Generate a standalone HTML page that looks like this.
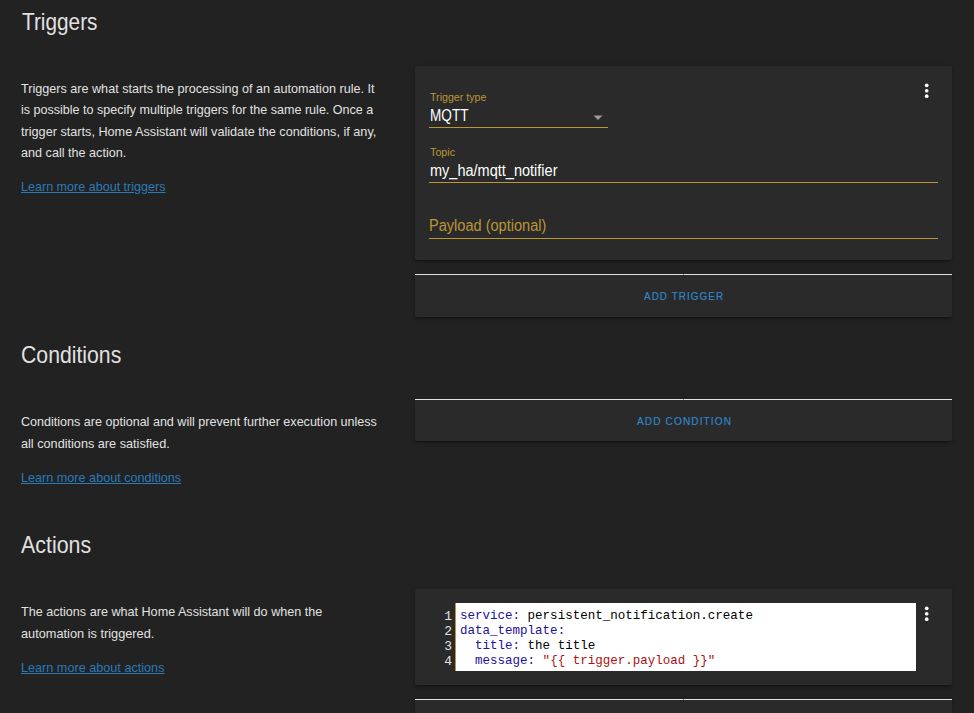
<!DOCTYPE html>
<html><head><meta charset="utf-8">
<style>
html,body{margin:0;padding:0;}
body{width:974px;height:713px;overflow:hidden;background:#222222;position:relative;font-family:"Liberation Sans",sans-serif;color:#e1e1e1;}
.t{position:absolute;white-space:nowrap;line-height:20px;transform-origin:0 0;}
.bm{display:inline-block;width:0;height:0;vertical-align:baseline;}
.abs{position:absolute;white-space:nowrap;}
.card{position:absolute;left:415px;width:537px;background:#2a2a2a;border-radius:2px;box-shadow:0 2px 2px 0 rgba(0,0,0,.14),0 1px 5px 0 rgba(0,0,0,.12),0 3px 1px -2px rgba(0,0,0,.2);}
.topline{position:absolute;left:0;right:0;top:0;height:1px;background:#e2e2e2;}
.notch{position:absolute;left:268px;top:0;width:1px;height:1px;background:#8a8a8a;}
.ul{position:absolute;height:1px;background:#bb9636;}
.dots{position:absolute;width:4px;}
.dots i{display:block;width:4px;height:4px;border-radius:50%;background:#fff;margin-bottom:1.5px;}
.code{font-family:"Liberation Mono",monospace;font-size:12.5px;line-height:15px;white-space:pre;}
.k{color:#221199;}
.s{color:#aa1111;}
</style></head>
<body>
<div class="card" style="top:66px;height:194px;">
  <svg class="abs" style="left:178px;top:48.8px;" width="10" height="6" viewBox="0 0 10 6"><path d="M0.5 0.5 L9.5 0.5 L5 5 Z" fill="#9a9a9a"/></svg>
  <div class="ul" style="left:14px;width:179px;top:61px;"></div>
  <div class="ul" style="left:14px;width:509px;top:116px;"></div>
  <div class="ul" style="left:14px;width:509px;top:172px;"></div>
  <svg class="abs" style="left:505px;top:12px;" width="14" height="25" viewBox="505 12 14 25"><circle cx="511.7" cy="19.3" r="1.85" fill="#fff"/><circle cx="511.7" cy="24.75" r="1.85" fill="#fff"/><circle cx="511.7" cy="30.2" r="1.85" fill="#fff"/></svg>
</div>
<div class="card" style="top:274px;height:43px;"><div class="topline"></div><div class="notch"></div></div>
<div class="card" style="top:399px;height:42px;"><div class="topline"></div><div class="notch"></div></div>
<div class="card" style="top:589px;height:96px;">
  <div class="abs code" style="left:19.5px;top:20px;width:17.5px;text-align:right;color:#e0e0e0;font-size:13px;">1
2
3
4</div>
  <div class="abs" style="left:40px;top:14px;width:460px;height:68px;background:#fff;border-left:1px solid #bb9636;"></div>
  <div class="abs code" style="left:44.5px;top:18.5px;color:#000;font-size:13.5px;transform:scaleX(0.927);transform-origin:0 0;"><span class="k">service:</span> persistent_notification.create
<span class="k">data_template:</span>
  <span class="k">title:</span> the title
  <span class="k">message:</span> <span class="s">"{{ trigger.payload }}"</span></div>
  <svg class="abs" style="left:505px;top:12px;" width="14" height="25" viewBox="505 12 14 25"><circle cx="511.7" cy="19.3" r="1.85" fill="#fff"/><circle cx="511.7" cy="24.75" r="1.85" fill="#fff"/><circle cx="511.7" cy="30.2" r="1.85" fill="#fff"/></svg>
</div>
<div class="card" style="top:699px;height:60px;"><div class="topline"></div><div class="notch"></div></div>
<div id="h1" class="t" style="left:21.50px;top:12.00px;font-size:23.2px;font-weight:400;color:#e1e1e1;transform:scaleX(0.8968);">Triggers<span class="bm"></span></div>
<div id="t1" class="t" style="left:20.50px;top:78.50px;font-size:13.2px;font-weight:400;color:#e1e1e1;transform:scaleX(0.9562);">Triggers are what starts the processing of an automation rule. It<span class="bm"></span></div>
<div id="t2" class="t" style="left:20.50px;top:100.00px;font-size:13.2px;font-weight:400;color:#e1e1e1;transform:scaleX(0.9518);">is possible to specify multiple triggers for the same rule. Once a<span class="bm"></span></div>
<div id="t3" class="t" style="left:20.50px;top:121.50px;font-size:13.2px;font-weight:400;color:#e1e1e1;transform:scaleX(0.9605);">trigger starts, Home Assistant will validate the conditions, if any,<span class="bm"></span></div>
<div id="t4" class="t" style="left:20.50px;top:143.00px;font-size:13.2px;font-weight:400;color:#e1e1e1;transform:scaleX(0.9574);">and call the action.<span class="bm"></span></div>
<div id="tl" class="t" style="left:20.50px;top:176.60px;font-size:13.2px;font-weight:400;color:#2b7ab8;transform:scaleX(0.9522);text-decoration:underline;">Learn more about triggers<span class="bm"></span></div>
<div id="h2" class="t" style="left:21.10px;top:344.70px;font-size:23.2px;font-weight:400;color:#e1e1e1;transform:scaleX(0.9153);">Conditions<span class="bm"></span></div>
<div id="c1" class="t" style="left:20.50px;top:411.80px;font-size:13.2px;font-weight:400;color:#e1e1e1;transform:scaleX(0.9519);">Conditions are optional and will prevent further execution unless<span class="bm"></span></div>
<div id="c2" class="t" style="left:20.50px;top:433.90px;font-size:13.2px;font-weight:400;color:#e1e1e1;transform:scaleX(0.9614);">all conditions are satisfied.<span class="bm"></span></div>
<div id="cl" class="t" style="left:20.50px;top:467.80px;font-size:13.2px;font-weight:400;color:#2b7ab8;transform:scaleX(0.9578);text-decoration:underline;">Learn more about conditions<span class="bm"></span></div>
<div id="h3" class="t" style="left:21.10px;top:534.70px;font-size:23.2px;font-weight:400;color:#e1e1e1;transform:scaleX(0.9217);">Actions<span class="bm"></span></div>
<div id="a1" class="t" style="left:20.50px;top:601.60px;font-size:13.2px;font-weight:400;color:#e1e1e1;transform:scaleX(0.9559);">The actions are what Home Assistant will do when the<span class="bm"></span></div>
<div id="a2" class="t" style="left:20.50px;top:623.70px;font-size:13.2px;font-weight:400;color:#e1e1e1;transform:scaleX(0.9672);">automation is triggered.<span class="bm"></span></div>
<div id="al" class="t" style="left:20.50px;top:657.80px;font-size:13.2px;font-weight:400;color:#2b7ab8;transform:scaleX(0.9594);text-decoration:underline;">Learn more about actions<span class="bm"></span></div>
<div id="f1" class="t" style="left:429.70px;top:86.90px;font-size:11.5px;font-weight:400;color:#bb9636;transform:scaleX(0.9241);">Trigger type<span class="bm"></span></div>
<div id="f2" class="t" style="left:429.50px;top:106.00px;font-size:15.8px;font-weight:400;color:#ffffff;transform:scaleX(0.8605);">MQTT<span class="bm"></span></div>
<div id="f3" class="t" style="left:429.90px;top:141.90px;font-size:11.5px;font-weight:400;color:#bb9636;transform:scaleX(0.9351);">Topic<span class="bm"></span></div>
<div id="f4" class="t" style="left:429.50px;top:161.20px;font-size:15.8px;font-weight:400;color:#ffffff;transform:scaleX(0.9190);">my_ha/mqtt_notifier<span class="bm"></span></div>
<div id="f5" class="t" style="left:428.50px;top:216.20px;font-size:15.8px;font-weight:400;color:#bb9636;transform:scaleX(0.9212);">Payload (optional)<span class="bm"></span></div>
<div id="b1" class="t" style="left:644.10px;top:286.00px;font-size:11.2px;font-weight:400;color:#2e86c9;transform:scaleX(0.8832);letter-spacing:1.2px;-webkit-text-stroke:0.2px #2e86c9;">ADD TRIGGER<span class="bm"></span></div>
<div id="b2" class="t" style="left:636.70px;top:411.10px;font-size:11.2px;font-weight:400;color:#2e86c9;transform:scaleX(0.9048);letter-spacing:1.2px;-webkit-text-stroke:0.2px #2e86c9;">ADD CONDITION<span class="bm"></span></div>
</body></html>
